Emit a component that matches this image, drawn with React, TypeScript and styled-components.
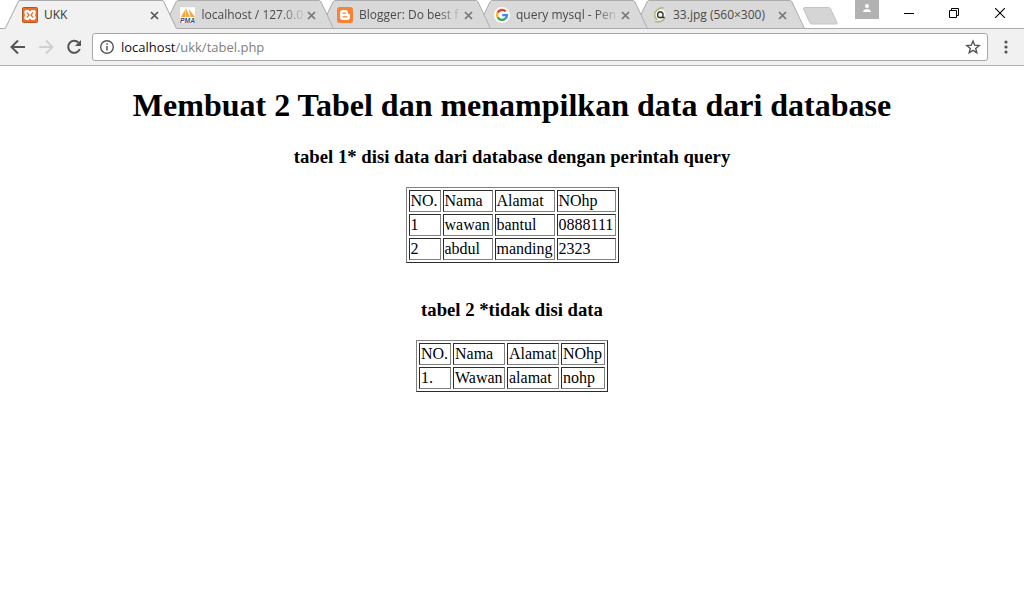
import React from "react";
import styled, { createGlobalStyle } from "styled-components";

const GlobalStyle = createGlobalStyle`
  * { box-sizing: border-box; }
  body { margin: 0; background: #fff; }
  button { border: 0; padding: 0; margin: 0; background: transparent; font: inherit; color: inherit; }
`;

const UI_FONT = `"Open Sans", "Noto Sans", sans-serif`;

const Browser = styled.div`
  min-height: 100vh;
  display: flex;
  flex-direction: column;
  background: #fff;
`;

const TitleBar = styled.header`
  display: flex;
  align-items: flex-start;
  height: 29px;
  padding-left: 4px;
  border-bottom: 1px solid #acacac;
  background: #fff;
`;

const TabStrip = styled.nav`
  display: flex;
  height: 29px;
  flex: none;
`;

const Tab = styled.div<{ $active?: boolean; $level: number }>`
  position: relative;
  z-index: ${(p) => p.$level};
  display: flex;
  align-items: center;
  flex: none;
  width: ${(p) => (p.$active ? 173 : 172)}px;
  height: 29px;
  margin-right: -15px;
  padding: 1px 15px 0 18px;
  font: 12px/16px ${UI_FONT};
  color: ${(p) => (p.$active ? "#333" : "#4a4a4a")};
`;

const TabShape = styled.svg`
  position: absolute;
  inset: 0;
  width: 100%;
  height: 29px;
`;

const TabButton = styled.button`
  position: relative;
  display: flex;
  align-items: center;
  gap: 6px;
  flex: 1;
  min-width: 0;
  text-align: left;
`;

const TabTitle = styled.span<{ $fade?: boolean }>`
  flex: 1;
  white-space: nowrap;
  ${(p) => p.$fade && "mask-image: linear-gradient(to right, #000 78%, rgba(0, 0, 0, 0.2) 98%);"}
`;

const CloseButton = styled.button`
  position: relative;
  display: flex;
  align-items: center;
  justify-content: center;
  width: 16px;
  height: 16px;
`;

const NewTab = styled.button`
  width: 36px;
  height: 18px;
  margin: 7px 0 0 12px;
`;

const Controls = styled.div`
  display: flex;
  margin-left: auto;
`;

const Profile = styled.button`
  width: 24px;
  height: 19px;
  margin-right: 7px;
  background: #b2b2b2;
`;

const Control = styled.button`
  display: flex;
  align-items: center;
  justify-content: center;
  width: 45px;
  height: 26px;
  &:last-child { width: 48px; }
`;

const Toolbar = styled.div`
  display: flex;
  align-items: center;
  height: 37px;
  padding: 0 9px;
  border-bottom: 1px solid #b1b1b1;
  background: #f1f1f1;
`;

const ToolButtons = styled.div`
  display: flex;
  gap: 10px;
  margin-right: 9px;
`;

const ToolButton = styled.button`
  display: flex;
  align-items: center;
  justify-content: center;
  width: 18px;
  height: 18px;
`;

const AddressBar = styled.div`
  display: flex;
  align-items: center;
  flex: 1;
  height: 28px;
  margin-right: 9px;
  padding: 0 5px;
  border: 1px solid #a6a6a6;
  border-radius: 3px;
  background: #fff;
`;

const Address = styled.a`
  flex: 1;
  margin-left: 5px;
  font: 13px/20px ${UI_FONT};
  color: #808080;
  text-decoration: none;
`;

const Host = styled.span`
  color: #111;
`;

const Page = styled.main`
  display: flex;
  flex-direction: column;
  align-items: center;
  padding: 21px 8px;
  font-family: "Liberation Serif", "Times New Roman", serif;
  color: #000;
`;

const Title = styled.h1`
  margin: 0 0 22px;
  font-size: 32px;
  line-height: 37px;
  text-align: center;
`;

const Section = styled.section`
  display: flex;
  flex-direction: column;
  align-items: center;
  margin-bottom: 36px;
`;

const Caption = styled.h3`
  margin: 0 0 19px;
  line-height: 22px;
  text-align: center;
`;

const Table = styled.table`
  border: 1px solid;
  border-color: #808080 #2c2c2c #2c2c2c #808080;
  border-spacing: 2px;
  font-size: 16px;
  line-height: 18px;
`;

const Column = styled.col<{ $width: number }>`
  width: ${(p) => p.$width}px;
`;

const Cell = styled.td`
  padding: 1px;
  border: 1px solid;
  border-color: #2c2c2c #808080 #808080 #2c2c2c;
`;

const XamppIcon = () => (
  <svg width="16" height="16" viewBox="0 0 16 16">
    <rect x=".5" y=".5" width="15" height="15" rx="1" fill="#e8702a" stroke="#b9541a" />
    <path d="M4.500 3H6.500L8 4.500 9.500 3h2C13 3 13.800 4 13.800 5.500L13 8l.8 2.500C13.800 12 13 13 11.500 13h-2L8 11.500 6.500 13h-2C3 13 2.200 12 2.200 10.500L3 8l-.8-2.500C2.200 4 3 3 4.500 3z" fill="#fff" />
    <path d="M4.800 5.500 6.300 7v2L4.800 10.500M11.200 5.500 9.700 7v2l1.500 1.500M6.300 8h3.400" fill="none" stroke="#e8702a" strokeWidth="1.200" />
  </svg>
);

const PmaIcon = () => (
  <svg width="16" height="16" viewBox="0 0 16 16">
    <rect width="16" height="16" fill="#fff" />
    <path d="M1 10 5.500 2v8zM6 10V0.500L10.200 10zM11 10 9 1.500 15.500 10z" fill="#f9a53a" />
    <text x="0" y="16" fontFamily="Liberation Sans, sans-serif" fontSize="7" fontWeight="700" fontStyle="italic" fill="#46467c">PMA</text>
  </svg>
);

const BloggerIcon = () => (
  <svg width="16" height="16" viewBox="0 0 16 16">
    <rect width="16" height="16" rx="2.500" fill="#f98335" />
    <path d="M6 3h2.500C10.500 3 11 4.500 11 6c0 .8.500 1 1.200 1 .6 0 .8.300.8.900V10c0 2-1 3-3 3H6c-2 0-3-1-3-3V6c0-2 1-3 3-3z" fill="#fff" />
    <path d="M6 6.200h2.500M6 9.800h4" stroke="#f98335" strokeWidth="1.300" strokeLinecap="round" />
  </svg>
);

const GoogleIcon = () => (
  <svg width="16" height="16" viewBox="0 0 16 16">
    <circle cx="8" cy="8" r="8" fill="#fff" />
    <g fill="none" strokeWidth="2.300">
      <path d="M11.600 4.400A5 5 0 0 0 3.600 5.700" stroke="#ea4335" />
      <path d="M3.600 5.700a5 5 0 0 0 0 4.600" stroke="#fbbc05" />
      <path d="M3.600 10.300a5 5 0 0 0 7.700 1.400" stroke="#34a853" />
      <path d="M11.300 11.700A5 5 0 0 0 13 8.100H8.200" stroke="#4285f4" />
    </g>
  </svg>
);

const SwirlIcon = () => (
  <svg width="16" height="16" viewBox="0 0 16 16" fill="none">
    <circle cx="9" cy="7.500" r="5.500" fill="#f4f5ee" />
    <path d="M12.500 .8C7 .8 3.700 4 3.700 8c0 2 .8 3.500 2.500 4.300M4 14.300c4.500 1.500 9.500 0 9.800-4.500" stroke="#a5b97a" strokeWidth="1.400" />
    <path d="M6.700 9.500V6.500L8 5h2.500L12 6.500v3L11 10.500H8z" stroke="#2c2c2c" strokeWidth="1.300" />
    <path d="M11 10.500h2.500" stroke="#2c2c2c" strokeWidth="1.200" />
  </svg>
);

interface TabData {
  title: string;
  icon: React.ReactNode;
  fade?: boolean;
}

const tabs: TabData[] = [
  { title: "UKK", icon: <XamppIcon /> },
  { title: "localhost / 127.0.0", icon: <PmaIcon />, fade: true },
  { title: "Blogger: Do best f", icon: <BloggerIcon />, fade: true },
  { title: "query mysql - Pen", icon: <GoogleIcon />, fade: true },
  { title: "33.jpg (560×300)", icon: <SwirlIcon /> },
];

function BrowserTab({ tab, index }: { tab: TabData; index: number }) {
  const active = index === 0;
  return (
    <Tab $active={active} $level={10 - index}>
      <TabShape viewBox="0 0 172 29" preserveAspectRatio="none">
        <path
          d={active ? "M0 29 1 28.500 14 1.500 15.500.500H157.500L159 1.500 171.500 28.500 172 29z" : "M1 28 14 1.500 15.500.500H157.500L159 1.500 171 28z"}
          fill={active ? "#f1f1f1" : "#d9d9d9"}
        />
        <path d="M.5 28.500 1.500 28 14 2 15.500.500H157.500L159 2 171.500 28.500" fill="none" stroke="#acacac" />
      </TabShape>
      <TabButton>
        {tab.icon}
        <TabTitle $fade={tab.fade}>{tab.title}</TabTitle>
      </TabButton>
      <CloseButton aria-label={`Close ${tab.title}`}>
        <svg width="9" height="9" viewBox="0 0 9 9">
          <path d="m1 1 7 7M8 1 1 8" stroke={active ? "#555" : "#777"} strokeWidth="1.700" />
        </svg>
      </CloseButton>
    </Tab>
  );
}

interface DataTableProps {
  caption: string;
  widths: number[];
  rows: string[][];
}

function DataTable({ caption, widths, rows }: DataTableProps) {
  return (
    <Section>
      <Caption>{caption}</Caption>
      <Table aria-label={caption}>
        <colgroup>
          {widths.map((width, i) => (
            <Column key={i} $width={width} />
          ))}
        </colgroup>
        <tbody>
          {rows.map((row) => (
            <tr key={row[0]}>
              {row.map((value) => (
                <Cell key={value}>{value}</Cell>
              ))}
            </tr>
          ))}
        </tbody>
      </Table>
    </Section>
  );
}

export default function App() {
  return (
    <Browser>
      <GlobalStyle />
      <TitleBar>
        <TabStrip aria-label="Tabs">
          {tabs.map((tab, i) => (
            <BrowserTab key={tab.title} tab={tab} index={i} />
          ))}
        </TabStrip>
        <NewTab aria-label="New tab">
          <svg width="36" height="18" viewBox="0 0 36 18">
            <path d="M3 .5h23.500q1.500 0 2 1l6.500 14q.500 1.500-1 1.500H10q-1.500 0-2-1L1.500 2Q1 .500 3 .500z" fill="#d5d5d5" stroke="#c4c4c4" />
          </svg>
        </NewTab>
        <Controls>
          <Profile aria-label="Profile">
            <svg width="24" height="19" viewBox="0 0 24 19" fill="#fff">
              <circle cx="12" cy="6" r="2" />
              <path d="M8 12c0-2 2.500-3 4-3s4 1 4 3z" />
            </svg>
          </Profile>
          <Control aria-label="Minimize">
            <svg width="10" height="10" viewBox="0 0 10 10"><path d="M0 5.500h10" stroke="#000" /></svg>
          </Control>
          <Control aria-label="Restore">
            <svg width="10" height="10" viewBox="0 0 10 10" fill="none" stroke="#000">
              <path d="M.5 2.500h7v7h-7zM2.500 2.500v-2h7v7h-2" />
            </svg>
          </Control>
          <Control aria-label="Close window">
            <svg width="10" height="10" viewBox="0 0 10 10"><path d="m0 0 10 10M10 0 0 10" stroke="#000" strokeWidth="1.100" /></svg>
          </Control>
        </Controls>
      </TitleBar>
      <Toolbar>
        <ToolButtons>
          <ToolButton aria-label="Back">
            <svg width="18" height="18" viewBox="0 0 18 18" fill="none" stroke="#555" strokeWidth="2">
              <path d="M16 9H3M9 2.500 2.500 9 9 15.500" />
            </svg>
          </ToolButton>
          <ToolButton aria-label="Forward" disabled>
            <svg width="18" height="18" viewBox="0 0 18 18" fill="none" stroke="#d0d0d0" strokeWidth="2">
              <path d="M2 9h13M9 2.500 15.500 9 9 15.500" />
            </svg>
          </ToolButton>
          <ToolButton aria-label="Reload">
            <svg width="18" height="18" viewBox="0 0 18 18">
              <path d="M13.500 4.600A6 6 0 1 0 14.800 11" fill="none" stroke="#555" strokeWidth="2" />
              <path d="M16 2v6h-6z" fill="#555" />
            </svg>
          </ToolButton>
        </ToolButtons>
        <AddressBar>
          <ToolButton aria-label="Site information">
            <svg width="16" height="16" viewBox="0 0 16 16">
              <circle cx="8" cy="8" r="6.300" fill="none" stroke="#555" strokeWidth="1.400" />
              <path d="M8 7v4.500M8 4.300v1.500" stroke="#555" strokeWidth="1.500" />
            </svg>
          </ToolButton>
          <Address href="#"><Host>localhost</Host>/ukk/tabel.php</Address>
          <ToolButton aria-label="Bookmark">
            <svg width="16" height="16" viewBox="0 0 16 16">
              <path d="m8 2 1.700 4.200 4.500.300-3.500 2.900 1.100 4.400L8 11.400l-3.800 2.400 1.100-4.400-3.500-2.900 4.500-.300z" fill="none" stroke="#555" strokeWidth="1.400" />
            </svg>
          </ToolButton>
        </AddressBar>
        <ToolButton aria-label="Menu">
          <svg width="4" height="14" viewBox="0 0 4 14" fill="#555">
            <circle cx="2" cy="2" r="1.600" />
            <circle cx="2" cy="7" r="1.600" />
            <circle cx="2" cy="12" r="1.600" />
          </svg>
        </ToolButton>
      </Toolbar>
      <Page>
        <Title>Membuat 2 Tabel dan menampilkan data dari database</Title>
        <DataTable
          caption="tabel 1* disi data dari database dengan perintah query"
          widths={[32, 50, 60, 59]}
          rows={[
            ["NO.", "Nama", "Alamat", "NOhp"],
            ["1", "wawan", "bantul", "0888111"],
            ["2", "abdul", "manding", "2323"],
          ]}
        />
        <DataTable
          caption="tabel 2 *tidak disi data"
          widths={[32, 52, 52, 44]}
          rows={[
            ["NO.", "Nama", "Alamat", "NOhp"],
            ["1.", "Wawan", "alamat", "nohp"],
          ]}
        />
      </Page>
    </Browser>
  );
}
